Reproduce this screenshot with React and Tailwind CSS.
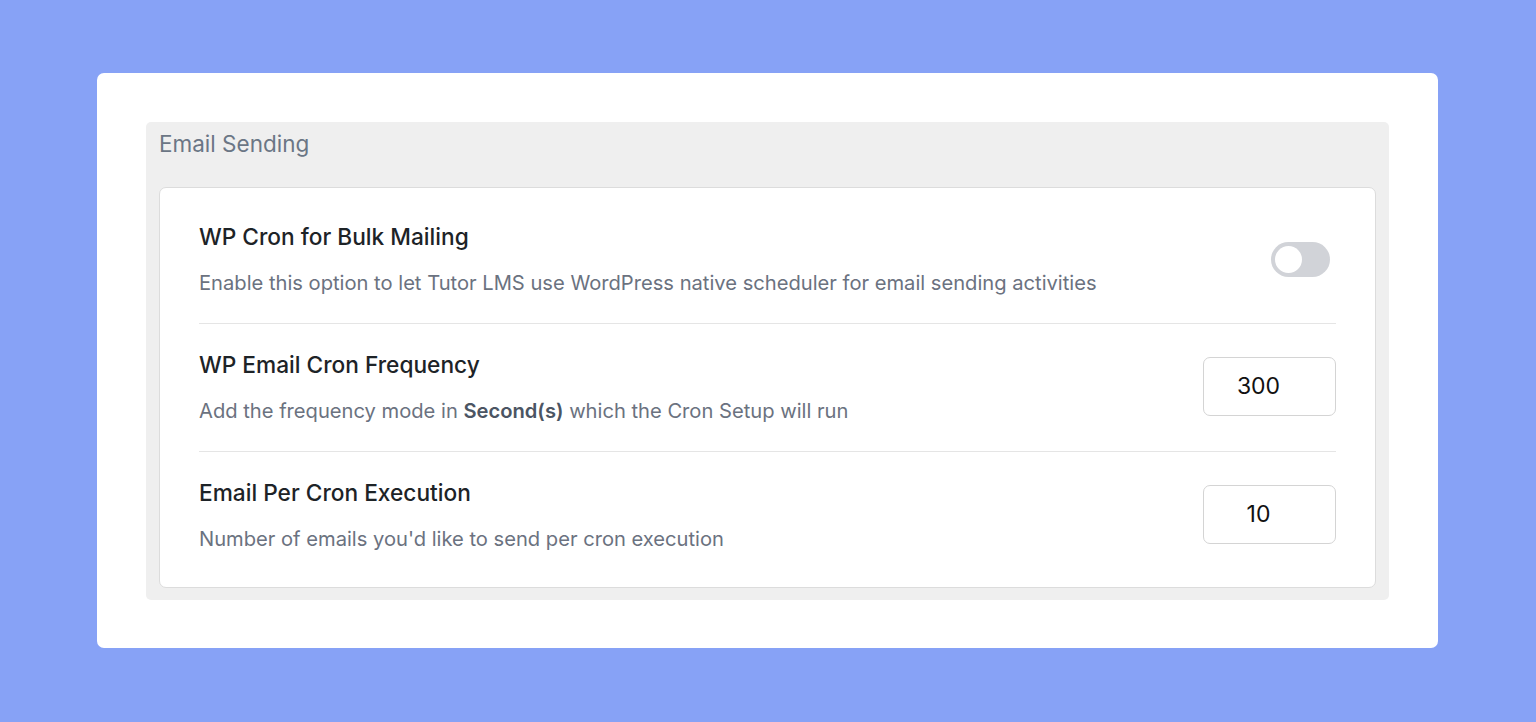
import React from "react";

function Row({ title, desc, control, last }) {
  return (
    <div className={`flex items-center justify-between py-[28px] ${last ? "" : "border-b border-[#e5e5e5]"}`}>
      <div className="flex flex-col gap-[21px]">
        <div className="text-[22.7px] leading-[26px] text-[#1d2327] font-medium">{title}</div>
        <div className="text-[20.15px] leading-[24px] text-[#6b7280]">{desc}</div>
      </div>
      {control}
    </div>
  );
}

function NumberBox({ value }) {
  return (
    <div className="w-[133px] h-[59px] mb-[3px] rounded-[7px] border border-[#d4d4d4] bg-white flex items-center justify-center pr-[22px] text-[23px] text-[#111]">
      {value}
    </div>
  );
}

function Toggle() {
  return (
    <div className="mr-[6px] w-[59px] h-[35px] rounded-full bg-[#d1d3d8] flex items-center px-[4px]">
      <div className="w-[27px] h-[27px] rounded-full bg-white" />
    </div>
  );
}

export default function App() {
  return (
    <div
      className="w-[1536px] h-[722px] bg-[#87a2f6] pt-[73px] pl-[97px]"
      style={{ fontFamily: "Inter, 'Noto Sans', sans-serif" }}
    >
      <div className="w-[1341px] h-[575px] bg-white rounded-[7px] pt-[49px] pl-[49px]">
        <div className="w-[1243px] h-[478px] bg-[#efefef] rounded-[5px] px-[13px] pt-[8px]">
          <div className="text-[22.5px] leading-[28px] text-[#6b7685] h-[57px]">Email Sending</div>
          <div className="bg-white border border-[#dcdcdc] rounded-[7px] px-[39px] py-[8px]">
            <Row
              title="WP Cron for Bulk Mailing"
              desc="Enable this option to let Tutor LMS use WordPress native scheduler for email sending activities"
              control={<Toggle />}
            />
            <Row
              title="WP Email Cron Frequency"
              desc={
                <>
                  Add the frequency mode in <span className="font-semibold text-[#4b5563]">Second(s)</span> which the Cron Setup will run
                </>
              }
              control={<NumberBox value="300" />}
            />
            <Row
              title="Email Per Cron Execution"
              desc="Number of emails you'd like to send per cron execution"
              control={<NumberBox value="10" />}
              last
            />
          </div>
        </div>
      </div>
    </div>
  );
}
